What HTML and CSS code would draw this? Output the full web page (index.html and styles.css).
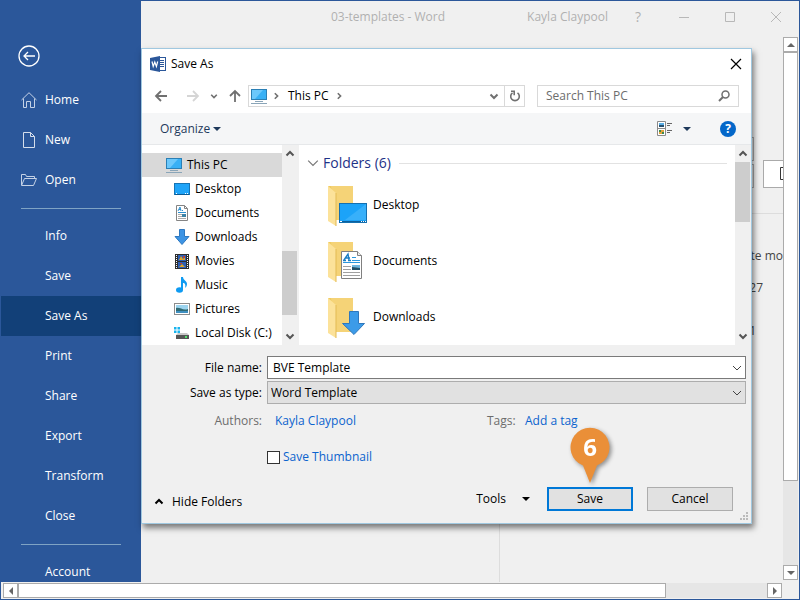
FILE: index.html
```
<!DOCTYPE html>
<html lang="en">
<head>
    <meta charset="UTF-8">
    <meta name="viewport" content="width=device-width, initial-scale=1.0">
    <title>03-templates - Word</title>
    <link rel="stylesheet" href="styles.css">
</head>
<body>
    <!-- Shared icons -->
    <svg class="defs" width="0" height="0">
        <symbol id="i-pc" viewBox="0 0 18 16">
            <rect x="1.5" y="1.5" width="15" height="10" fill="#38b0f5" stroke="#2a7fb5"/>
            <path d="M2 2h11L5 11H2z" fill="#6cc8fb"/>
            <path d="M5 13.5h8M1 15.5h16" stroke="#8aa5b8"/>
        </symbol>
        <symbol id="i-desktop" viewBox="0 0 16 16">
            <rect x=".5" y="2.5" width="15" height="11" fill="#1fa4f8" stroke="#1674b4"/>
            <path d="M1 13.5h14" stroke="#0c5a92"/>
            <path d="M2 12.5h1M11 12.5h1M13 12.5h1" stroke="#fff"/>
        </symbol>
        <symbol id="i-document" viewBox="0 0 16 16">
            <path d="M2.5.5h8l3 3v12h-11z" fill="#fff" stroke="#848484"/>
            <path d="M10.5.5v3h3" fill="none" stroke="#848484"/>
            <path d="M4 6l2-4 1 4M5 4.500h2M8 5.500h1M4 7.500h8" fill="none" stroke="#2b8fd0"/>
            <path d="M4 9.500h4M4 11.500h4M4 13.500h8" stroke="#aaa"/>
            <rect x="8" y="9" width="4" height="3" fill="#3b82a6"/>
        </symbol>
        <symbol id="i-download" viewBox="0 0 16 16">
            <path d="M5.500 .5h5v7h4.500L8 15.500 1 7.500h4.500z" fill="#3d94e4" stroke="#2e78c0"/>
        </symbol>
        <symbol id="i-movie" viewBox="0 0 16 16">
            <rect x="1" y="1" width="14" height="15" fill="#2e2e2e"/>
            <rect x="4" y="2" width="8" height="6" fill="#2e5fb4"/>
            <rect x="4" y="9" width="8" height="6" fill="#2e5fb4"/>
            <path d="M5 7l2-4 2 3 2-2v3zM5 14l3-3 3 3z" fill="#dba52c"/>
            <path d="M9 3h2v2H9zM6 10h2v1H6z" fill="#c2422c"/>
            <path d="M2.500 2v14M13.500 2v14" stroke="#fff" stroke-dasharray="1 1"/>
        </symbol>
        <symbol id="i-music" viewBox="0 0 16 16">
            <ellipse cx="5.500" cy="13" rx="3.500" ry="2.800" fill="#0f9bf2"/>
            <path d="M7 0h2c0 3 4 4 4 7 0 2-1 3-2 4 1-3 0-5-2-5v7H7z" fill="#0f9bf2"/>
        </symbol>
        <symbol id="i-picture" viewBox="0 0 16 16">
            <rect x=".5" y="2.500" width="15" height="11" fill="#fff" stroke="#8c8c8c"/>
            <rect x="2" y="4" width="12" height="8" fill="#9cd4ef"/>
            <path d="M2 7c4-1 7 3 12 1v4H2z" fill="#2f6a73"/>
            <path d="M2 10h12v2H2z" fill="#3f8fc0"/>
        </symbol>
        <symbol id="i-disk" viewBox="0 0 16 16">
            <path d="M0 2h2.500v2.500H0zM3.500 2H6v2.500H3.500zM0 5.500h2.500V8H0zM3.500 5.500H6V8H3.500z" fill="#18b4ee"/>
            <path d="M4 8h9l2 2H2z" fill="#c9c9c9"/>
            <rect x="2" y="10" width="13" height="4" fill="#555"/>
            <path d="M11 12h2" stroke="#4fe06a" stroke-width="2"/>
        </symbol>
        <symbol id="i-folder" viewBox="0 0 40 40">
            <path d="M0 0h25v34H8z" fill="#efcb62"/>
            <path d="M3 0h22v34H8z" fill="#f5d377"/>
            <path d="M0 0l8 7v33L0 35z" fill="#fce29a"/>
            <path d="M8 7v33" stroke="#e3bb55"/>
        </symbol>
        <symbol id="i-chevron" viewBox="0 0 10 10">
            <path d="M1 3l4 4 4-4" fill="none" stroke="currentColor"/>
        </symbol>
        <symbol id="i-chevron-bold" viewBox="0 0 10 10">
            <path d="M1.500 3.500L5 7l3.500-3.500" fill="none" stroke="currentColor" stroke-width="2"/>
        </symbol>
        <symbol id="i-caret" viewBox="0 0 8 4">
            <path d="M0 0h8L4 4z" fill="currentColor"/>
        </symbol>
        <symbol id="i-arrow" viewBox="0 0 14 12">
            <path d="M13 6H2M7 1L2 6l5 5" fill="none" stroke="currentColor" stroke-width="1.800"/>
        </symbol>
    </svg>

    <div class="window">
        <div class="workspace">
            <nav class="backstage">
                <button class="back" aria-label="Back">
                    <svg width="22" height="22" viewBox="0 0 22 22" fill="none" stroke="#fff">
                        <circle cx="11" cy="11" r="10" stroke-width="1.300"/>
                        <path d="M17 11H6M10 7l-4 4 4 4" stroke-width="1.300"/>
                    </svg>
                </button>
                <a href="#">
                    <svg width="16" height="16" viewBox="0 0 16 16" fill="none" stroke="#c5d2e6"><path d="M.5 8L8 .7 15.500 8M2.500 6.500v9h3v-6h4v6h4v-9"/></svg>
                    Home
                </a>
                <a href="#">
                    <svg width="16" height="16" viewBox="0 0 16 16" fill="none" stroke="#d5deec"><path d="M2.500 .5h7l4 4v11h-11zM9.500 .5v4h4"/></svg>
                    New
                </a>
                <a href="#">
                    <svg width="16" height="16" viewBox="0 0 16 16" fill="none" stroke="#c5d2e6"><path d="M.5 13V2.500h4l1 2h8v2M.5 13.500l3-7h12l-3 7z"/></svg>
                    Open
                </a>
                <hr>
                <a href="#">Info</a>
                <a href="#">Save</a>
                <a href="#" class="active">Save As</a>
                <a href="#">Print</a>
                <a href="#">Share</a>
                <a href="#">Export</a>
                <a href="#">Transform</a>
                <a href="#">Close</a>
                <hr>
                <a href="#">Account</a>
            </nav>

            <main>
                <header class="titlebar">
                    <h1>03-templates - Word</h1>
                    <span class="user">Kayla Claypool</span>
                    <button class="help">?</button>
                    <button aria-label="Minimize"><svg width="12" height="12" viewBox="0 0 12 12"><path d="M1 6.500h10"/></svg></button>
                    <button aria-label="Maximize"><svg width="12" height="12" viewBox="0 0 12 12"><path d="M1.500 1.500h9v9h-9z"/></svg></button>
                    <button aria-label="Close Word"><svg width="12" height="12" viewBox="0 0 12 12"><path d="M1 1l10 10M11 1L1 11"/></svg></button>
                </header>
                <div class="content">
                    <section class="places"></section>
                    <section class="recent">
                        <div class="path-row">
                            <div class="boxes"><div></div><div></div></div>
                            <button class="browse" aria-label="Browse">
                                <svg width="3" height="16" viewBox="0 0 3 16" fill="none" stroke="#333"><path d="M3 1.500H.5v12H3"/></svg>
                            </button>
                        </div>
                        <p class="head">te mo</p>
                        <p>27</p>
                        <p class="last">1</p>
                    </section>
                    <div class="scroll-v">
                        <button aria-label="Scroll up"><svg class="flip" width="8" height="4"><use href="#i-caret"/></svg></button>
                        <div class="thumb"></div>
                        <div class="track"></div>
                        <button aria-label="Scroll down"><svg width="8" height="4"><use href="#i-caret"/></svg></button>
                    </div>
                </div>
            </main>
        </div>
        <div class="scroll-h">
            <button aria-label="Scroll left"><svg width="4" height="8" viewBox="0 0 4 8"><path d="M4 0v8L0 4z" fill="currentColor"/></svg></button>
            <div class="thumb"></div>
            <div class="track"></div>
            <button aria-label="Scroll right"><svg width="4" height="8" viewBox="0 0 4 8"><path d="M0 0v8l4-4z" fill="currentColor"/></svg></button>
        </div>

        <div class="dialog" role="dialog" aria-labelledby="dialog-title">
            <div class="dialog-title">
                <svg width="16" height="16" viewBox="0 0 16 16">
                    <rect x="7.500" y="1.500" width="8" height="13" fill="#fff" stroke="#2b579a"/>
                    <path d="M10 4.500h4M10 6.500h4M10 8.500h4M10 10.500h4" stroke="#2b579a"/>
                    <path d="M0 2l10-2v16L0 14z" fill="#2b579a"/>
                    <path d="M2 5.500l1.200 5L4.800 6l1.600 4.500 1.300-5" fill="none" stroke="#fff" stroke-width="1.200"/>
                </svg>
                <h2 id="dialog-title">Save As</h2>
                <button aria-label="Close dialog"><svg width="12" height="12" viewBox="0 0 12 12"><path d="M1 1l10 10M11 1L1 11" stroke="#000" stroke-width="1.200"/></svg></button>
            </div>

            <div class="address-row">
                <div class="history">
                    <button aria-label="Back"><svg width="14" height="12"><use href="#i-arrow"/></svg></button>
                    <button class="off" aria-label="Forward"><svg class="flip" width="14" height="12"><use href="#i-arrow"/></svg></button>
                    <button aria-label="Recent"><svg width="8" height="8"><use href="#i-chevron-bold"/></svg></button>
                    <button aria-label="Up"><svg class="up" width="14" height="12"><use href="#i-arrow"/></svg></button>
                </div>
                <div class="address">
                    <svg width="18" height="16"><use href="#i-pc"/></svg>
                    <svg class="right" width="8" height="8"><use href="#i-chevron-bold"/></svg>
                    <span>This PC</span>
                    <svg class="right" width="8" height="8"><use href="#i-chevron-bold"/></svg>
                    <button class="drop" aria-label="Previous locations"><svg width="10" height="10"><use href="#i-chevron-bold"/></svg></button>
                    <button class="refresh" aria-label="Refresh">
                        <svg width="12" height="12" viewBox="0 0 12 12" fill="none" stroke="#707070" stroke-width="1.600"><path d="M3.500 2.800A4.300 4.300 0 1 0 8.500 2.800M2 1.200h3.200v4"/></svg>
                    </button>
                </div>
                <label class="search">
                    <input type="search" placeholder="Search This PC" aria-label="Search This PC">
                    <svg width="12" height="12" viewBox="0 0 12 12" fill="none" stroke="#707070"><circle cx="7.500" cy="4.500" r="3.500" stroke-width="1.500"/><path d="M5 7l-4 4" stroke-width="2"/></svg>
                </label>
            </div>

            <div class="toolbar">
                <button class="organize">Organize <svg width="8" height="4"><use href="#i-caret"/></svg></button>
                <button class="view" aria-label="Change view">
                    <svg width="16" height="16" viewBox="0 0 16 16">
                        <path d="M.5 .5h8v14h-8zM.5 7.500h8" fill="#fff" stroke="#8a8a8a"/>
                        <path d="M2 2h5v4H2z" fill="#5aaee6"/><path d="M2 4h5v2H2z" fill="#27506f"/>
                        <path d="M2 9h5v4H2z" fill="#e3a33b"/><path d="M2 9h2v2H2zM5 11h2v2H5z" fill="#3c8a4d"/>
                        <path d="M10 2.500h5M10 4.500h3M10 9.500h5M10 11.500h3" stroke="#666"/>
                    </svg>
                    <svg width="8" height="4"><use href="#i-caret"/></svg>
                </button>
                <button class="info" aria-label="Help">?</button>
            </div>

            <div class="panes">
                <ul class="tree">
                    <li class="root"><svg width="18" height="16"><use href="#i-pc"/></svg>This PC</li>
                    <li><svg width="16" height="16"><use href="#i-desktop"/></svg>Desktop</li>
                    <li><svg width="16" height="16"><use href="#i-document"/></svg>Documents</li>
                    <li><svg width="16" height="16"><use href="#i-download"/></svg>Downloads</li>
                    <li><svg width="16" height="16"><use href="#i-movie"/></svg>Movies</li>
                    <li><svg width="16" height="16"><use href="#i-music"/></svg>Music</li>
                    <li><svg width="16" height="16"><use href="#i-picture"/></svg>Pictures</li>
                    <li><svg width="16" height="16"><use href="#i-disk"/></svg>Local Disk (C:)</li>
                </ul>
                <div class="bar tree-bar">
                    <svg class="flip" width="10" height="10"><use href="#i-chevron-bold"/></svg>
                    <div class="rail"><div class="grip"></div></div>
                    <svg width="10" height="10"><use href="#i-chevron-bold"/></svg>
                </div>
                <section class="files">
                    <h3><svg width="12" height="12"><use href="#i-chevron"/></svg>Folders (6)</h3>
                    <ul>
                        <li>
                            <svg width="40" height="40" viewBox="0 0 40 40">
                                <use href="#i-folder" width="40" height="40"/>
                                <rect x="11.500" y="17.500" width="27" height="19" fill="#1ca3f8" stroke="#1470b0"/>
                                <path d="M38 18v16H17z" fill="#38b0fa"/>
                                <path d="M12 35.500h26" stroke="#0d5f9c"/>
                                <path d="M12 35.500h2M33 35.500h1M35 35.500h1M37 35.500h1" stroke="#fff"/>
                            </svg>
                            Desktop
                        </li>
                        <li>
                            <svg width="40" height="40" viewBox="0 0 40 40">
                                <use href="#i-folder" width="40" height="40"/>
                                <path d="M13.500 9.500h16l4 4v23h-20z" fill="#fff" stroke="#808080"/>
                                <path d="M29.500 9.500v4h4" fill="#eee" stroke="#808080"/>
                                <path d="M16 18l4-6 1 6M18 16h4M15 18.500h3M20 18.500h3" fill="none" stroke="#1c7fc4" stroke-width="1.400"/>
                                <path d="M24 15.500h4M24 18.500h8M15 20.500h17" stroke="#2b97dc"/>
                                <path d="M15 24.500h8M15 27.500h8M15 30.500h17M15 33.500h17" stroke="#a0a0a0"/>
                                <rect x="24" y="23" width="8" height="5" fill="#6fb5de"/><path d="M24 25l8 1v2h-8z" fill="#234f66"/>
                            </svg>
                            Documents
                        </li>
                        <li>
                            <svg width="40" height="40" viewBox="0 0 40 40">
                                <use href="#i-folder" width="40" height="40"/>
                                <path d="M21.500 13.500h9v12h6L26 36.500 14.500 25.500h7z" fill="#3c9be8" stroke="#2f78bd"/>
                            </svg>
                            Downloads
                        </li>
                    </ul>
                </section>
                <div class="bar files-bar">
                    <svg class="flip" width="10" height="10"><use href="#i-chevron-bold"/></svg>
                    <div class="rail"><div class="grip"></div></div>
                    <svg width="10" height="10"><use href="#i-chevron-bold"/></svg>
                </div>
            </div>

            <form class="fields">
                <label for="filename">File name:</label>
                <div class="combo">
                    <input type="text" id="filename" value="BVE Template">
                    <svg width="10" height="10"><use href="#i-chevron"/></svg>
                </div>
                <label for="filetype">Save as type:</label>
                <div class="combo">
                    <select id="filetype"><option>Word Template</option></select>
                    <svg width="10" height="10"><use href="#i-chevron"/></svg>
                </div>
                <span class="meta-label">Authors:</span>
                <div class="meta">
                    <a href="#">Kayla Claypool</a>
                    <span>Tags:</span>
                    <a href="#">Add a tag</a>
                </div>
                <label class="thumbnail"><input type="checkbox"> Save Thumbnail</label>
            </form>

            <div class="actions">
                <button class="plain hide"><svg class="flip" width="10" height="10"><use href="#i-chevron-bold"/></svg>Hide Folders</button>
                <button class="plain tools">Tools <svg width="8" height="4"><use href="#i-caret"/></svg></button>
                <div class="save">
                    <button class="push default">Save</button>
                    <div class="pin">
                        <svg width="40" height="56" viewBox="0 0 40 56"><path d="M20 56l-7-17.500A19.500 19.500 0 1 1 27 38.500z" fill="#ea8f38"/></svg>
                        <span>6</span>
                    </div>
                </div>
                <button class="push">Cancel</button>
            </div>
            <svg class="resize" width="9" height="9" viewBox="0 0 9 9" fill="#bbb"><path d="M6 0h2v2H6zM3 3h2v2H3zM6 3h2v2H6zM0 6h2v2H0zM3 6h2v2H3zM6 6h2v2H6z"/></svg>
        </div>
    </div>
</body>
</html>
```
FILE: styles.css
```
* {
    box-sizing: border-box;
}
body {
    margin: 0;
    font-family: "Open Sans", "Noto Sans", sans-serif;
    font-size: 12px;
    line-height: 16px;
    color: #000;
}
h1, h2, h3, p, ul {
    margin: 0;
    padding: 0;
    font-size: 12px;
    font-weight: normal;
    list-style: none;
}
button, input, select {
    font: inherit;
    color: inherit;
    margin: 0;
    padding: 0;
    border: none;
    border-radius: 0;
    background: none;
}
button {
    display: flex;
    align-items: center;
    justify-content: center;
}
a {
    color: #0b63ce;
    text-decoration: none;
}
svg {
    display: block;
    flex: none;
}
.defs {
    position: absolute;
}
.flip {
    transform: rotate(180deg);
}
.right {
    transform: rotate(-90deg);
}
.up {
    transform: rotate(90deg);
}

/* Word window */
.window {
    position: relative;
    display: flex;
    flex-direction: column;
    height: 100vh;
    border: 1px solid #2b579a;
    background: #f0f0f0;
    overflow: hidden;
}
.workspace {
    flex: 1;
    display: flex;
    min-height: 0;
}
.backstage {
    width: 140px;
    flex: none;
    background: #2b579a;
    overflow: hidden;
}
.back {
    height: 79px;
    padding: 31px 17px 0;
}
.backstage a {
    display: flex;
    align-items: center;
    height: 40px;
    padding-left: 44px;
    color: #fff;
}
.backstage a svg {
    margin: 0 8px 0 -24px;
}
.backstage .active {
    background: #124078;
}
.backstage hr {
    height: 1px;
    margin: 8px 20px 7px;
    border: none;
    background: #7fa3c4;
}
main {
    flex: 1;
    display: flex;
    flex-direction: column;
    min-width: 0;
}
.titlebar {
    display: flex;
    align-items: center;
    height: 36px;
    padding-bottom: 4px;
    color: #b0b0b0;
}
.titlebar h1 {
    flex: 1;
    padding-right: 82px;
    text-align: right;
}
.titlebar .user {
    margin-right: 7px;
}
.titlebar button {
    width: 46px;
    height: 32px;
}
.titlebar path {
    fill: none;
    stroke: #b8b8b8;
}
.titlebar .help {
    font-size: 14px;
}
.content {
    flex: 1;
    display: flex;
    min-height: 0;
}
.places {
    flex: 359;
    margin-top: 16px;
    border-right: 1px solid #ddd;
}
.recent {
    flex: 283;
    padding-top: 101px;
    color: #444;
    text-align: right;
    overflow: hidden;
}
.path-row {
    display: flex;
    justify-content: flex-end;
    align-items: flex-end;
    gap: 9px;
    height: 76px;
    padding-bottom: 25px;
    border-bottom: 1px solid #ddd;
}
.boxes {
    flex: 1;
    display: grid;
    gap: 3px;
}
.boxes div {
    height: 24px;
    border: 1px solid #aaa;
}
.browse {
    justify-content: flex-end;
    width: 20px;
    height: 28px;
    border: 1px solid #aaa;
    border-right: none;
    background: #fff;
}
.recent p {
    padding: 8px 20px 8px 0;
}
.recent .head {
    padding: 34px 0 8px;
}
.recent .last {
    padding: 19px 27px 8px 0;
}
.scroll-v {
    display: flex;
    flex-direction: column;
    width: 15px;
    margin-right: 1px;
    padding-bottom: 2px;
}
.scroll-h {
    display: flex;
    height: 17px;
    padding: 1px 17px 1px 2px;
    background: #f0f0f0;
}
.scroll-v button,
.scroll-h button {
    flex: none;
    width: 15px;
    height: 15px;
    border: 1px solid #ababab;
    background: #fff;
    color: #666;
}
.scroll-v .thumb,
.scroll-h .thumb {
    border: 1px solid #ababab;
    background: #fff;
}
.scroll-v .track,
.scroll-h .track {
    background: #e6e6e6;
}
.scroll-v .thumb {
    flex: 429;
}
.scroll-v .track {
    flex: 85;
}
.scroll-h .thumb {
    flex: 648;
}
.scroll-h .track {
    flex: 101;
}

/* Save As dialog */
.dialog {
    position: absolute;
    top: 47px;
    left: 140px;
    right: 47px;
    border: 1px solid #a0c8e0;
    background: #f0f0f0;
    box-shadow: 2px 4px 6px rgba(0, 0, 0, .5);
}
.dialog-title {
    display: flex;
    align-items: center;
    gap: 5px;
    height: 30px;
    padding: 0 8px;
    background: #fff;
}
.dialog-title h2 {
    flex: 1;
}
.dialog-title button {
    width: 14px;
    height: 24px;
}
.address-row {
    display: flex;
    align-items: center;
    height: 34px;
    padding: 0 12px;
    background: #fff;
}
.history {
    display: flex;
    align-items: center;
    justify-content: space-between;
    width: 88px;
    margin-right: 6px;
    color: #707070;
}
.history .off {
    margin-left: 8px;
    color: #d5d5d5;
}
.address {
    flex: 1;
    display: flex;
    align-items: center;
    height: 22px;
    margin-right: 12px;
    padding-left: 1px;
    border: 1px solid #d9d9d9;
    color: #707070;
}
.address span {
    margin: 0 8px;
    color: #000;
}
.address .right {
    margin-left: 4px;
}
.address .right + span {
    margin-right: 2px;
}
.address .drop {
    width: 20px;
    height: 20px;
    margin-left: auto;
}
.address .refresh {
    width: 20px;
    height: 20px;
    border-left: 1px solid #d9d9d9;
}
.search {
    display: flex;
    align-items: center;
    width: 202px;
    height: 22px;
    padding: 0 8px;
    border: 1px solid #d9d9d9;
}
.search input {
    flex: 1;
    min-width: 0;
    outline: none;
}
.search input::placeholder {
    color: #6d6d6d;
}
.toolbar {
    display: flex;
    align-items: center;
    height: 32px;
    padding: 0 15px 0 18px;
    border-bottom: 1px solid #e6e8ea;
    background: #f5f6f7;
    color: #1e395b;
}
.organize {
    gap: 3px;
}
.view {
    gap: 10px;
    margin-left: auto;
}
.info {
    width: 16px;
    height: 16px;
    margin-left: 29px;
    border-radius: 50%;
    background: #0467c9;
    color: #fff;
    font-weight: bold;
}
.panes {
    display: flex;
    height: 200px;
    background: #fff;
}
.tree {
    width: 140px;
    padding-top: 8px;
}
.tree li {
    display: flex;
    align-items: center;
    gap: 5px;
    height: 24px;
    padding-left: 32px;
    white-space: nowrap;
}
.tree .root {
    gap: 4px;
    padding-left: 23px;
    background: #d9d9d9;
}
.bar {
    display: flex;
    flex-direction: column;
    align-items: center;
    flex: none;
    width: 16px;
    padding: 4px 0;
    background: #f0f0f0;
    color: #555;
}
.rail {
    flex: 1;
    display: flex;
    align-items: flex-end;
    width: 100%;
    padding: 3px 1px 16px 0;
}
.grip {
    width: 100%;
    height: 64px;
    background: #cdcdcd;
}
.files-bar .rail {
    align-items: flex-start;
}
.files-bar .grip {
    height: 60px;
}
.files {
    flex: 1;
    padding: 10px 8px 0 8px;
    border-left: 1px solid #f0f0f0;
}
.files h3 {
    display: flex;
    align-items: center;
    gap: 4px;
    font-size: 14px;
    color: #1e3287;
}
.files h3 svg {
    color: #777;
}
.files h3::after {
    content: "";
    flex: 1;
    height: 1px;
    margin-left: 4px;
    background: #e2e2e2;
}
.files ul {
    padding: 15px 21px 0;
}
.files li {
    display: flex;
    align-items: flex-start;
    gap: 5px;
    height: 56px;
    line-height: 38px;
}

/* File name and type */
.fields {
    display: grid;
    grid-template-columns: 120px 1fr;
    column-gap: 5px;
    row-gap: 2px;
    align-items: center;
    padding: 11px 5px 0 0;
}
.fields > label,
.meta-label {
    text-align: right;
}
.combo {
    position: relative;
}
.combo input,
.combo select {
    display: block;
    width: 100%;
    height: 23px;
    padding: 0 20px 0 5px;
    border: 1px solid #7a7a7a;
    background: #fff;
}
.combo select {
    appearance: none;
    padding-left: 3px;
    border-color: #adadad;
    background: #e1e1e1;
}
.combo svg {
    position: absolute;
    right: 4px;
    top: 7px;
    color: #444;
}
.meta-label,
.meta span {
    color: #6d6d6d;
}
.meta {
    display: grid;
    grid-template-columns: 212px 38px 1fr;
    height: 30px;
    padding-left: 8px;
    align-items: center;
}
.fields .thumbnail {
    grid-column: 2;
    display: flex;
    align-items: center;
    gap: 3px;
    height: 38px;
    color: #0b63ce;
}
.thumbnail input {
    appearance: none;
    width: 13px;
    height: 13px;
    border: 1px solid #333;
    background: #fff;
}
.actions {
    display: flex;
    align-items: center;
    height: 47px;
    padding: 0 18px 2px 12px;
}
.plain {
    gap: 8px;
}
.hide {
    margin-right: auto;
    padding-top: 6px;
}
.tools {
    gap: 16px;
    margin-right: 17px;
}
.save {
    position: relative;
    margin-right: 14px;
}
.push {
    width: 86px;
    height: 24px;
    border: 1px solid #adadad;
    background: #e1e1e1;
}
.push.default {
    border: 2px solid #0078d7;
}
.pin {
    position: absolute;
    left: 23px;
    bottom: 28px;
    filter: drop-shadow(2px 2px 2px rgba(0, 0, 0, .4));
}
.pin span {
    position: absolute;
    top: 0;
    width: 100%;
    color: #fff;
    font-size: 24px;
    font-weight: bold;
    line-height: 40px;
    text-align: center;
}
.resize {
    position: absolute;
    right: 2px;
    bottom: 2px;
}
```
